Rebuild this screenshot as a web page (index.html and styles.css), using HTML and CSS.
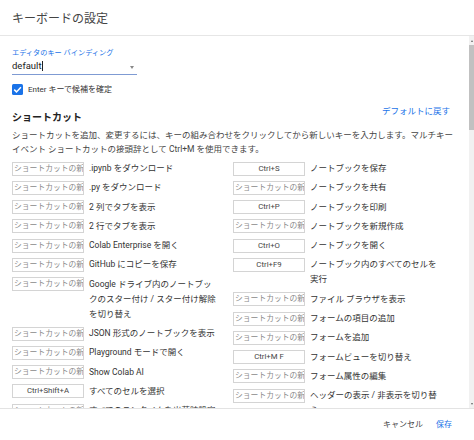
FILE: index.html
```html
<!DOCTYPE html>
<html lang="ja">
<head>
<meta charset="utf-8">
<title>キーボードの設定</title>
<link rel="stylesheet" href="styles.css">
</head>
<body>
<div class="dialog">
  <div class="header">キーボードの設定</div>
  <div class="main">
    <div class="content">
      <div class="field-label">エディタのキー バインディング</div>
      <div class="select">
        <span class="select-value">default<span class="caret"></span></span>
        <span class="arrow"></span>
      </div>
      <label class="check-row">
        <span class="checkbox"><svg viewBox="0 0 11 11" width="11" height="11"><path d="M2.2 5.6 L4.5 7.9 L8.9 3.2" fill="none" stroke="#fff" stroke-width="1.5"/></svg></span>
        <span>Enter キーで候補を確定</span>
      </label>
      <div class="section-head">
        <span class="section-title">ショートカット</span>
        <span class="reset">デフォルトに戻す</span>
      </div>
      <p class="desc">ショートカットを追加、変更するには、キーの組み合わせをクリックしてから新しいキーを入力します。マルチキー<br>イベント ショートカットの接頭辞として Ctrl+M を使用できます。</p>
      <div class="shortcuts">
        <div class="col">
          <div class="item"><span class="key empty">ショートカットの新</span><span class="name">.ipynb をダウンロード</span></div>
          <div class="item"><span class="key empty">ショートカットの新</span><span class="name">.py をダウンロード</span></div>
          <div class="item"><span class="key empty">ショートカットの新</span><span class="name">2 列でタブを表示</span></div>
          <div class="item"><span class="key empty">ショートカットの新</span><span class="name">2 行でタブを表示</span></div>
          <div class="item"><span class="key empty">ショートカットの新</span><span class="name">Colab Enterprise を開く</span></div>
          <div class="item"><span class="key empty">ショートカットの新</span><span class="name">GitHub にコピーを保存</span></div>
          <div class="item"><span class="key empty">ショートカットの新</span><span class="name">Google ドライブ内のノートブッ<br>クのスター付け / スター付け解除<br>を切り替え</span></div>
          <div class="item"><span class="key empty">ショートカットの新</span><span class="name">JSON 形式のノートブックを表示</span></div>
          <div class="item"><span class="key empty">ショートカットの新</span><span class="name">Playground モードで開く</span></div>
          <div class="item"><span class="key empty">ショートカットの新</span><span class="name">Show Colab AI</span></div>
          <div class="item"><span class="key">Ctrl+Shift+A</span><span class="name">すべてのセルを選択</span></div>
          <div class="item"><span class="key empty">ショートカットの新</span><span class="name">すべてのランタイムを出荷時設定<br>にリセット</span></div>
        </div>
        <div class="col">
          <div class="item"><span class="key">Ctrl+S</span><span class="name">ノートブックを保存</span></div>
          <div class="item"><span class="key empty">ショートカットの新</span><span class="name">ノートブックを共有</span></div>
          <div class="item"><span class="key">Ctrl+P</span><span class="name">ノートブックを印刷</span></div>
          <div class="item"><span class="key empty">ショートカットの新</span><span class="name">ノートブックを新規作成</span></div>
          <div class="item"><span class="key">Ctrl+O</span><span class="name">ノートブックを開く</span></div>
          <div class="item"><span class="key">Ctrl+F9</span><span class="name">ノートブック内のすべてのセルを<br>実行</span></div>
          <div class="item"><span class="key empty">ショートカットの新</span><span class="name">ファイル ブラウザを表示</span></div>
          <div class="item"><span class="key empty">ショートカットの新</span><span class="name">フォームの項目の追加</span></div>
          <div class="item"><span class="key empty">ショートカットの新</span><span class="name">フォームを追加</span></div>
          <div class="item"><span class="key">Ctrl+M F</span><span class="name">フォームビューを切り替え</span></div>
          <div class="item"><span class="key empty">ショートカットの新</span><span class="name">フォーム属性の編集</span></div>
          <div class="item"><span class="key empty">ショートカットの新</span><span class="name">ヘッダーの表示 / 非表示を切り替<br>え</span></div>
        </div>
      </div>
    </div>
    <div class="scrollbar">
      <span class="sb-arrow up"></span>
      <span class="thumb"></span>
      <span class="track"></span>
      <span class="sb-arrow down"></span>
    </div>
  </div>
  <div class="footer">
    <span class="btn">キャンセル</span>
    <span class="btn primary">保存</span>
  </div>
</div>
</body>
</html>
```

FILE: styles.css
```css
* { box-sizing: border-box; }
html, body { margin: 0; padding: 0; }
body {
  width: 474px;
  height: 440px;
  overflow: hidden;
  background: #fff;
  font-family: Roboto, "Noto Sans CJK JP", sans-serif;
  color: #3c4043;
}
.dialog {
  display: flex;
  flex-direction: column;
  height: 440px;
}
.header {
  height: 36px;
  flex: none;
  display: flex;
  align-items: center;
  padding-left: 12px;
  font-size: 12px;
  color: #444;
  border-bottom: 1px solid #e6e6e6;
}
.main {
  flex: 1;
  min-height: 0;
  display: flex;
}
.content {
  flex: 1;
  min-width: 0;
  overflow: hidden;
  padding: 12px 12px 0 12px;
}
.field-label {
  font-size: 7.2px;
  line-height: 10px;
  color: #1a73e8;
}
.select {
  width: 125px;
  height: 17px;
  padding: 1px 3px 0 0;
  display: flex;
  justify-content: space-between;
  align-items: flex-start;
  border-bottom: 1px solid #7f9bd3;
}
.select-value {
  font-size: 9.5px;
  line-height: 14px;
  color: #222;
  display: flex;
  align-items: center;
}
.caret {
  width: 1px;
  height: 10px;
  background: #222;
  margin-left: 0.5px;
}
.arrow {
  margin-top: 7px;
  width: 0;
  height: 0;
  border-left: 2.5px solid transparent;
  border-right: 2.5px solid transparent;
  border-top: 3px solid #888;
}
.check-row {
  margin-top: 9px;
  display: flex;
  align-items: center;
  gap: 5px;
  font-size: 8px;
  line-height: 11px;
  color: #333;
}
.checkbox {
  width: 11px;
  height: 11px;
  border-radius: 1.5px;
  background: #1a73e8;
  display: flex;
}
.section-head {
  margin-top: 15.5px;
  display: flex;
  justify-content: space-between;
  align-items: flex-start;
}
.section-title {
  font-size: 10px;
  line-height: 14px;
  font-weight: bold;
  color: #222;
}
.reset {
  margin-top: -4.5px;
  margin-right: 7px;
  font-size: 8.5px;
  line-height: 10px;
  color: #1a73e8;
}
.desc {
  margin: 4.5px 0 0 0;
  font-size: 8.5px;
  line-height: 13.5px;
  color: #444;
  white-space: nowrap;
}
.shortcuts {
  margin-top: 5px;
  display: grid;
  grid-template-columns: 221px 1fr;
}
.col {
  display: flex;
  flex-direction: column;
}
.item {
  display: flex;
  align-items: flex-start;
  gap: 5px;
  margin-bottom: 4.3px;
}
.key {
  flex: none;
  width: 72px;
  height: 14px;
  margin-top: 0.5px;
  border: 1px solid #d4d4d4;
  padding: 0 1px;
  font-size: 7.8px;
  line-height: 12px;
  text-align: center;
  white-space: nowrap;
  overflow: hidden;
  color: #444;
}
.key.empty {
  text-align: left;
  color: #8a8a8a;
}
.name {
  font-size: 8.5px;
  line-height: 15px;
  color: #333;
  white-space: nowrap;
}
.scrollbar {
  width: 5px;
  flex: none;
  display: flex;
  flex-direction: column;
  align-items: center;
  background: #f1f1f1;
  padding: 4px 0 3px;
}
.sb-arrow {
  width: 0;
  height: 0;
  border-left: 1.5px solid transparent;
  border-right: 1.5px solid transparent;
}
.sb-arrow.up { border-bottom: 2px solid #666; margin-bottom: 3px; }
.sb-arrow.down { border-top: 2px solid #666; margin-top: 3px; }
.thumb {
  width: 5px;
  height: 85px;
  background: #c1c1c1;
}
.track {
  flex: 1;
}
.footer {
  height: 32px;
  flex: none;
  border-top: 1px solid #e3e3e3;
  display: flex;
  justify-content: flex-end;
  align-items: center;
  gap: 13px;
  padding: 0 22px 2px 0;
  font-size: 8px;
}
.btn { color: #444; }
.btn.primary { color: #1a73e8; }
```
